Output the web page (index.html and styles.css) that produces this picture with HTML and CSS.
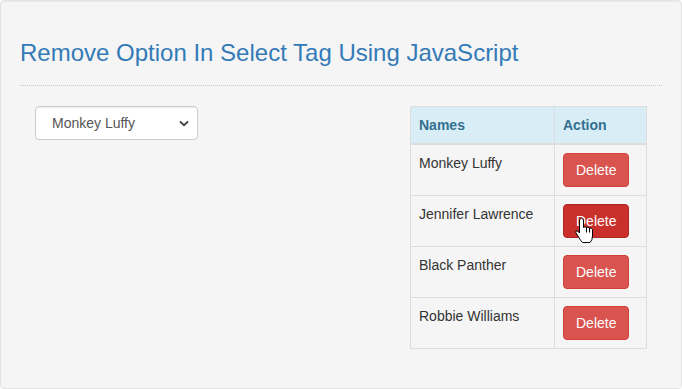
FILE: index.html
```html
<!DOCTYPE html>
<html>
<head>
<meta charset="utf-8">
<title>Remove Option In Select Tag Using JavaScript</title>
<link rel="stylesheet" href="styles.css">
</head>
<body>
<div class="well">
  <h3 class="title">Remove Option In Select Tag Using JavaScript</h3>
  <hr class="divider">
  <div class="row">
    <div class="select-wrap">
      <select class="form-control">
        <option>Monkey Luffy</option>
        <option>Jennifer Lawrence</option>
        <option>Black Panther</option>
        <option>Robbie Williams</option>
      </select>
      <svg class="chevron" width="10" height="7" viewBox="0 0 10 7"><path d="M1 1.5 L5 5.2 L9 1.5" fill="none" stroke="#444" stroke-width="1.8"/></svg>
    </div>
    <table class="names">
      <colgroup><col class="c1"><col class="c2"></colgroup>
      <thead>
        <tr class="info"><th>Names</th><th>Action</th></tr>
      </thead>
      <tbody>
        <tr><td>Monkey Luffy</td><td><button class="btn">Delete</button></td></tr>
        <tr><td>Jennifer Lawrence</td><td class="hover-cell"><button class="btn hover">Delete</button>
          <svg class="cursor" width="20" height="27" viewBox="0 0 20 27"><path d="M4.5 2.5 Q6.5 0.2 8.5 2.5 L8.5 10.5 Q10 9 11.5 10.5 Q13 9.5 14.5 11.2 Q16.5 10.5 17.5 12.5 L17.5 19 Q17.5 23 15 25.5 L7.5 25.5 Q5.5 23.5 3.5 20 L0.8 15.5 Q0.5 13.2 2.8 14 L4.5 16 Z" fill="#fff" stroke="#000" stroke-width="1" stroke-linejoin="round"/><path d="M11.5 10.5 L11.5 15.5 M14.5 11.2 L14.5 15.5" stroke="#000" stroke-width="1" fill="none"/></svg>
        </td></tr>
        <tr><td>Black Panther</td><td><button class="btn">Delete</button></td></tr>
        <tr><td>Robbie Williams</td><td><button class="btn">Delete</button></td></tr>
      </tbody>
    </table>
  </div>
</div>
</body>
</html>
```
FILE: styles.css
```css
* { box-sizing: border-box; }
html, body { margin: 0; padding: 0; }
body {
  font-family: "Liberation Sans", Arial, sans-serif;
  font-size: 14px;
  line-height: 20px;
  color: #333;
  background: #fff;
}
.well {
  width: 682px;
  height: 389px;
  background: #f5f5f5;
  border: 1px solid #e3e3e3;
  border-radius: 4px;
  padding: 19px;
  box-shadow: inset 0 1px 1px rgba(0,0,0,0.05);
}
.title {
  margin: 20px 0 0;
  font-size: 24px;
  line-height: 26px;
  font-weight: 500;
  color: #337ab7;
}
.divider {
  margin: 19px 0 0;
  border: 0;
  border-top: 1px dotted #c8c8c8;
  height: 0;
}
.row {
  display: flex;
  align-items: flex-start;
  margin-top: 20px;
}
.select-wrap {
  position: relative;
  margin-left: 15px;
  width: 163px;
}
.form-control {
  display: block;
  width: 163px;
  height: 34px;
  padding: 6px 12px 6px 16px;
  font-family: "Liberation Sans", Arial, sans-serif;
  font-size: 14px;
  color: #555;
  background: #fff;
  border: 1px solid #ccc;
  border-radius: 4px;
  box-shadow: inset 0 1px 1px rgba(0,0,0,0.075);
  -webkit-appearance: none;
  appearance: none;
  outline: none;
}
.chevron {
  position: absolute;
  right: 9px;
  top: 14px;
  pointer-events: none;
}
.names {
  margin-left: auto;
  margin-right: 15px;
  width: 236px;
  table-layout: fixed;
  border-collapse: collapse;
  border: 1px solid #ddd;
}
.c1 { width: 144px; }
.c2 { width: 92px; }
.names th, .names td {
  border: 1px solid #ddd;
  padding: 8px;
  line-height: 20px;
  text-align: left;
  vertical-align: top;
}
.names thead th {
  border-bottom: 2px solid #ddd;
  vertical-align: bottom;
  font-weight: bold;
}
.info th {
  background: #d9edf7;
  color: #31708f;
}
.btn {
  display: inline-block;
  padding: 6px 12px;
  font-family: "Liberation Sans", Arial, sans-serif;
  font-size: 14px;
  line-height: 20px;
  color: #fff;
  background: #d9534f;
  border: 1px solid #d43f3a;
  border-radius: 4px;
  cursor: pointer;
}
.btn.hover {
  background: #c9302c;
  border-color: #ac2925;
}
.hover-cell { position: relative; }
.cursor {
  position: absolute;
  left: 20px;
  top: 21px;
}
```
